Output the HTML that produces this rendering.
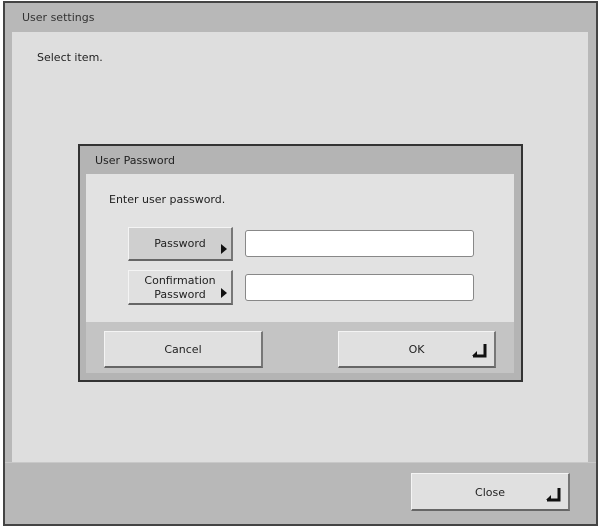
<!DOCTYPE html>
<html><head><style>
body{margin:0;width:600px;height:530px;background:#fff;position:relative;font-family:"DejaVu Sans","Liberation Sans",sans-serif;font-size:11px;color:#222;overflow:hidden}
div{position:absolute;box-sizing:border-box}
.btn{background:#e0e0e0;border:1px solid #f4f4f4;border-right:2px solid #777;border-bottom:2px solid #666;text-align:center}
.inp{background:#fff;border:1px solid #888;border-radius:3px}
.tri{width:0;height:0;border-top:5px solid transparent;border-bottom:5px solid transparent;border-left:6px solid #111}
</style></head><body>
<div style="left:3px;top:1px;width:595px;height:525px;border:2px solid #444;background:#b8b8b8"></div>
<div style="left:22px;top:11px;color:#333">User settings</div>
<div style="left:12px;top:32px;width:576px;height:430px;background:#dedede"></div>
<div style="left:37px;top:51px">Select item.</div>

<div style="left:78px;top:144px;width:445px;height:238px;border:2px solid #333;background:#b4b4b4"></div>
<div style="left:95px;top:154px">User Password</div>
<div style="left:86px;top:174px;width:428px;height:148px;background:#e2e2e2"></div>
<div style="left:86px;top:322px;width:428px;height:51px;background:#c4c4c4"></div>
<div style="left:109px;top:193px">Enter user password.</div>

<div class="btn" style="left:128px;top:227px;width:105px;height:34px;background:#cfcfcf;padding-top:9px">Password</div>
<div class="tri" style="left:221px;top:244px"></div>
<div class="inp" style="left:245px;top:230px;width:229px;height:27px"></div>
<div class="btn" style="left:128px;top:270px;width:105px;height:35px;padding-top:3px;line-height:14px">Confirmation<br>Password</div>
<div class="tri" style="left:221px;top:288px"></div>
<div class="inp" style="left:245px;top:274px;width:229px;height:27px"></div>

<div class="btn" style="left:104px;top:331px;width:159px;height:37px;padding-top:11px">Cancel</div>
<div class="btn" style="left:338px;top:331px;width:158px;height:37px;padding-top:11px">OK</div>
<svg style="position:absolute;left:471px;top:343px" width="18" height="16"><path d="M14 1V13H2" stroke="#111" stroke-width="3" fill="none"/><path d="M1 13L6 8V13Z" fill="#111"/></svg>

<div style="left:5px;top:462px;width:591px;height:1px;background:#c8c8c8"></div>
<div class="btn" style="left:411px;top:473px;width:159px;height:38px;padding-top:12px">Close</div>
<svg style="position:absolute;left:545px;top:487px" width="18" height="16"><path d="M14 1V13H2" stroke="#111" stroke-width="3" fill="none"/><path d="M1 13L6 8V13Z" fill="#111"/></svg>
</body></html>
